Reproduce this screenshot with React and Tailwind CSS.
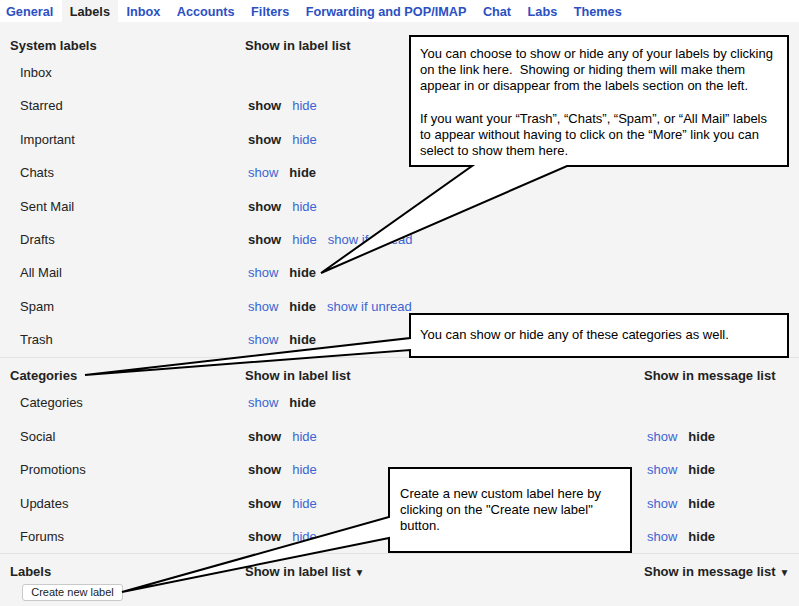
import React from 'react';

const tabs = ['General', 'Labels', 'Inbox', 'Accounts', 'Filters', 'Forwarding and POP/IMAP', 'Chat', 'Labs', 'Themes'];

const systemLabels = [
    { name: 'Inbox' },
    { name: 'Starred', list: 'show' },
    { name: 'Important', list: 'show' },
    { name: 'Chats', list: 'hide' },
    { name: 'Sent Mail', list: 'show' },
    { name: 'Drafts', list: 'show', unread: true },
    { name: 'All Mail', list: 'hide' },
    { name: 'Spam', list: 'hide', unread: true },
    { name: 'Trash', list: 'hide' },
];

const categories = [
    { name: 'Categories', list: 'hide' },
    { name: 'Social', list: 'show', msg: 'hide' },
    { name: 'Promotions', list: 'show', msg: 'hide' },
    { name: 'Updates', list: 'show', msg: 'hide' },
    { name: 'Forums', list: 'show', msg: 'hide' },
];

const Opt = ({ label, active }) =>
    active ? (
        <span className="font-bold text-[#222]">{label}</span>
    ) : (
        <span className="text-[#3d64d2]">{label}</span>
    );

const Toggle = ({ value, unread }) => {
    if (!value) return null;
    return (
        <div className="flex gap-[11px] pl-[3px]">
            <Opt label="show" active={value === 'show'} />
            <Opt label="hide" active={value === 'hide'} />
            {unread && <Opt label="show if unread" active={false} />}
        </div>
    );
};

const Row = ({ item }) => (
    <div className="flex items-center h-[33.4px]">
        <div className="w-[245px] pl-5 text-[#222]">{item.name}</div>
        <div className="w-[399px]">
            <Toggle value={item.list} unread={item.unread} />
        </div>
        <div className="flex-1">
            <Toggle value={item.msg} />
        </div>
    </div>
);

const Header = ({ title, list, msg, arrow }) => (
    <div className="flex items-center h-[21px] font-bold text-[#222]">
        <div className="w-[245px] pl-[10px]">{title}</div>
        <div className="w-[399px]">
            {list && (
                <span>
                    Show in label list{arrow && <span className="text-[10px] ml-[4px]">▼</span>}
                </span>
            )}
        </div>
        <div className="flex-1">
            {msg && (
                <span>
                    Show in message list{arrow && <span className="text-[10px] ml-[4px]">▼</span>}
                </span>
            )}
        </div>
    </div>
);

const App = () => {
    return (
        <div
            className="relative w-[799px] h-[606px] overflow-hidden bg-[#f4f4f4] text-[13px]"
            style={{ fontFamily: '"Liberation Sans", Arial, sans-serif' }}
        >
            {/* tab bar */}
            <div className="flex h-[22px] bg-white font-bold text-[12.7px]">
                {tabs.map((tab, i) => (
                    <div
                        key={tab}
                        className={`flex items-center pt-[3px] ${i === 0 ? 'pl-[6px]' : 'pl-[8px]'} pr-[8.5px] ${
                            tab === 'Labels' ? 'bg-[#f4f4f4] text-[#222]' : 'text-[#2b50c2]'
                        }`}
                    >
                        {tab}
                    </div>
                ))}
            </div>

            {/* system labels */}
            <div className="pt-[13px] border-b border-[#e3e3e3]">
                <Header title="System labels" list />
                {systemLabels.map((item) => (
                    <Row key={item.name} item={item} />
                ))}
            </div>

            {/* categories */}
            <div className="pt-[8px] border-b border-[#e3e3e3]">
                <Header title="Categories" list msg />
                {categories.map((item) => (
                    <Row key={item.name} item={item} />
                ))}
            </div>

            {/* labels */}
            <div className="pt-[7px]">
                <Header title="Labels" list msg arrow />
                <button className="ml-[22px] mt-[2px] h-[17px] w-[101px] flex items-center justify-center bg-white border border-[#c9c9c9] rounded-[3px] text-[11px] text-[#222] leading-none">
                    Create new label
                </button>
            </div>

            {/* annotation callouts */}
            <svg className="absolute inset-0 pointer-events-none" width="799" height="606">
                <polygon
                    points="410,36 788,36 788,166 567,166 321,273 472,166 410,166"
                    fill="white"
                    stroke="black"
                    strokeWidth="2"
                />
                <polygon
                    points="410,314 788,314 788,357 410,357 410,350 85,375 410,338"
                    fill="white"
                    stroke="black"
                    strokeWidth="2"
                />
                <polygon
                    points="389,468 631,468 631,552 389,552 389,538 122,592 389,517"
                    fill="white"
                    stroke="black"
                    strokeWidth="2"
                />
            </svg>

            <div className="absolute left-[420px] top-[46px] text-[13px] leading-[16.2px] text-black whitespace-nowrap">
                <p>
                    You can choose to show or hide any of your labels by clicking<br />
                    on the link here.&nbsp; Showing or hiding them will make them<br />
                    appear in or disappear from the labels section on the left.
                </p>
                <p className="mt-[16px]">
                    If you want your “Trash”, “Chats”, “Spam”, or “All Mail” labels<br />
                    to appear without having to click on the “More” link you can<br />
                    select to show them here.
                </p>
            </div>

            <div className="absolute left-[420px] top-[327px] text-[13px] leading-[16px] text-black whitespace-nowrap">
                You can show or hide any of these categories as well.
            </div>

            <div className="absolute left-[400px] top-[486px] text-[13px] leading-[16.2px] text-black whitespace-nowrap">
                Create a new custom label here by<br />
                clicking on the "Create new label"<br />
                button.
            </div>
        </div>
    );
};

export default App;
